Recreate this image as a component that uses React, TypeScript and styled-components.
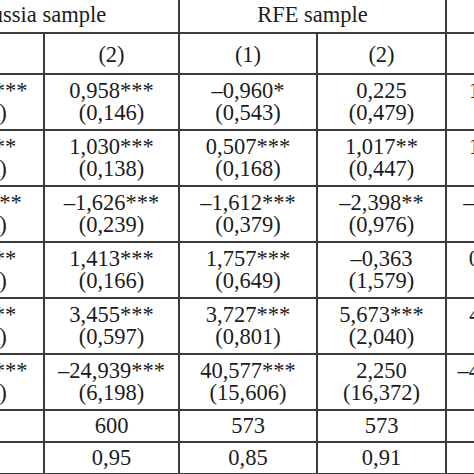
import styled, { createGlobalStyle } from 'styled-components';

const GlobalStyle = createGlobalStyle`
  html, body {
    margin: 0;
    padding: 0;
    background: #ffffff;
  }
`;

type Kind = 'group' | 'num' | 'coef' | 'stat';

const padFor: { [key in Kind]: string } = {
  group: '4px 0 6px',
  num: '10px 0 7px',
  coef: '5px 0 5px',
  stat: '4px 0 4px',
};

const Viewport = styled.div`
  width: 474px;
  height: 474px;
  overflow: hidden;
  background: #ffffff;
`;

const Table = styled.table`
  border-collapse: collapse;
  table-layout: fixed;
  width: 802px;
  margin-left: -97px;
  font-family: 'Liberation Serif', 'Times New Roman', serif;
  font-size: 22.5px;
  line-height: 22px;
  color: #1c1c1c;
`;

const Cell = styled.td<{ $kind: Kind }>`
  padding: ${(p) => padFor[p.$kind]};
  border: 2px solid #3b3b3b;
  border-top: ${(p) => (p.$kind === 'group' ? 'none' : '2px solid #3b3b3b')};
  font-weight: normal;
  text-align: center;
  vertical-align: top;
  white-space: nowrap;
`;

const Line = styled.div``;

const widths = [140, 135, 138, 129, 130, 130];

type Coef = [string, string];

const columns: Coef[][] = [
  [
    ['–10,842***', '(0,151)'],
    ['1,085***', '(0,142)'],
    ['–1,580***', '(0,231)'],
    ['1,392***', '(0,170)'],
    ['3,301***', '(0,588)'],
    ['–23,916***', '(6,054)'],
  ],
  [
    ['0,958***', '(0,146)'],
    ['1,030***', '(0,138)'],
    ['–1,626***', '(0,239)'],
    ['1,413***', '(0,166)'],
    ['3,455***', '(0,597)'],
    ['–24,939***', '(6,198)'],
  ],
  [
    ['–0,960*', '(0,543)'],
    ['0,507***', '(0,168)'],
    ['–1,612***', '(0,379)'],
    ['1,757***', '(0,649)'],
    ['3,727***', '(0,801)'],
    ['40,577***', '(15,606)'],
  ],
  [
    ['0,225', '(0,479)'],
    ['1,017**', '(0,447)'],
    ['–2,398**', '(0,976)'],
    ['–0,363', '(1,579)'],
    ['5,673***', '(2,040)'],
    ['2,250', '(16,372)'],
  ],
  [
    ['1,102***', '(0,140)'],
    ['1,046***', '(0,133)'],
    ['–1,671***', '(0,228)'],
    ['0,944***', '(0,175)'],
    ['4,118***', '(0,563)'],
    ['–41,306***', '(6,870)'],
  ],
  [
    ['1,087***', '(0,144)'],
    ['1,052***', '(0,129)'],
    ['–1,702***', '(0,219)'],
    ['0,910***', '(0,181)'],
    ['4,201***', '(0,570)'],
    ['–40,112***', '(6,902)'],
  ],
];

const stats = [
  ['600', '600', '573', '573', '1173', '1173'],
  ['0,95', '0,95', '0,85', '0,91', '0,93', '0,94'],
];

const numbers = ['(1)', '(2)', '(1)', '(2)', '(1)', '(2)'];

const groups = ['Russia sample', 'RFE sample', 'Pooled sample'];

export default function App() {
  return (
    <Viewport>
      <GlobalStyle />
      <Table>
        <colgroup>
          {widths.map((w, i) => (
            <col key={i} style={{ width: w }} />
          ))}
        </colgroup>
        <thead>
          <tr>
            {groups.map((g) => (
              <Cell as="th" key={g} $kind="group" colSpan={2}>
                {g}
              </Cell>
            ))}
          </tr>
          <tr>
            {numbers.map((n, i) => (
              <Cell as="th" key={i} $kind="num">
                {n}
              </Cell>
            ))}
          </tr>
        </thead>
        <tbody>
          {columns[0].map((_, r) => (
            <tr key={r}>
              {columns.map((col, c) => (
                <Cell key={c} $kind="coef">
                  <Line>{col[r][0]}</Line>
                  <Line>{col[r][1]}</Line>
                </Cell>
              ))}
            </tr>
          ))}
          {stats.map((row, r) => (
            <tr key={`s${r}`}>
              {row.map((v, c) => (
                <Cell key={c} $kind="stat">
                  {v}
                </Cell>
              ))}
            </tr>
          ))}
        </tbody>
      </Table>
    </Viewport>
  );
}
